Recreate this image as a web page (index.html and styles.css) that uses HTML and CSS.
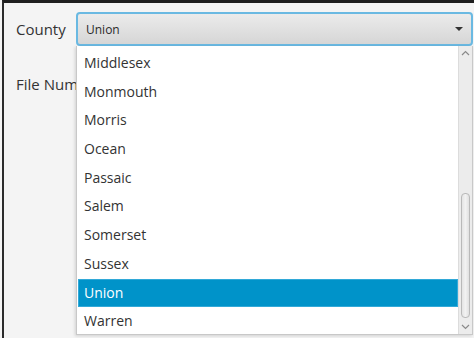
FILE: index.html
```html
<!DOCTYPE html>
<html lang="en">
<head>
    <meta charset="UTF-8">
    <title>County Picker</title>
    <link rel="stylesheet" href="styles.css">
</head>
<body>
    <div class="window">
        <div class="form">
            <div class="row">
                <label class="label">County</label>
                <div class="combo-wrap">
                    <div class="combo">
                        <span class="combo-value">Union</span>
                        <span class="combo-arrow"></span>
                    </div>

                    <!-- open popup list -->
                    <div class="popup">
                        <ul class="list">
                            <li>Middlesex</li>
                            <li>Monmouth</li>
                            <li>Morris</li>
                            <li>Ocean</li>
                            <li>Passaic</li>
                            <li>Salem</li>
                            <li>Somerset</li>
                            <li>Sussex</li>
                            <li class="selected">Union</li>
                            <li>Warren</li>
                        </ul>
                        <div class="scrollbar">
                            <svg class="sb-arrow" width="9" height="6" viewBox="0 0 9 6"><path d="M1 5 L4.5 1.5 L8 5" fill="none" stroke="#8a8a8a" stroke-width="1.2"/></svg>
                            <div class="track">
                                <div class="thumb"></div>
                            </div>
                            <svg class="sb-arrow" width="9" height="6" viewBox="0 0 9 6"><path d="M1 1 L4.5 4.5 L8 1" fill="none" stroke="#8a8a8a" stroke-width="1.2"/></svg>
                        </div>
                    </div>
                </div>
            </div>
            <div class="row">
                <label class="label">File Number</label>
            </div>
        </div>
    </div>
</body>
</html>
```

FILE: styles.css
```css
body {
    margin: 0;
    background: #f4f4f4;
    font-family: "Open Sans", "Noto Sans", sans-serif;
    color: #333;
}

.window {
    height: 335px;
    margin-left: 2px;
    border-top: 3px solid #1f1f1f;
    border-left: 2px solid #2b2b2b;
    background: #f4f4f4;
    overflow: hidden;
}

.form {
    padding: 9px 1px 0 12px;
}

.row {
    display: flex;
    align-items: center;
    height: 34px;
    margin-bottom: 21px;
}

.label {
    width: 60px;
    font-size: 15px;
    color: #333;
    white-space: nowrap;
    overflow: hidden;
}

.combo-wrap {
    position: relative;
    flex: 1;
    height: 34px;
}

.combo {
    display: flex;
    align-items: center;
    justify-content: space-between;
    height: 30px;
    padding: 0 8px 0 8px;
    border: 2px solid #6ab9e2;
    border-radius: 4px;
    background: linear-gradient(#ebebeb, #d6d6d6);
}

.combo-value {
    font-size: 12px;
    color: #2a2a2a;
}

.combo-arrow {
    width: 0;
    height: 0;
    border-left: 4px solid transparent;
    border-right: 4px solid transparent;
    border-top: 4px solid #333;
}

.popup {
    position: absolute;
    top: 34px;
    left: 0;
    right: 0;
    height: 288px;
    display: flex;
    background: #fff;
    border: 1px solid #c8c8c8;
    border-top: none;
    box-shadow: -1px 1px 3px rgba(0, 0, 0, 0.15);
}

.list {
    flex: 1;
    margin: 0;
    padding: 3px 0 0 1px;
    list-style: none;
}

.list li {
    height: 28.7px;
    line-height: 28px;
    padding-left: 6px;
    font-size: 14px;
    color: #333;
    box-sizing: border-box;
}

.list li.selected {
    background: #0093c9;
    border: 1px solid #32a9d8;
    line-height: 26px;
    padding-left: 5px;
    color: #fff;
}

.scrollbar {
    width: 13px;
    display: flex;
    flex-direction: column;
    align-items: center;
    background: #ececec;
    border-left: 1px solid #dcdcdc;
}

.sb-arrow {
    flex: none;
    margin: 4px 0;
}

.track {
    flex: 1;
    width: 100%;
    display: flex;
    flex-direction: column;
    justify-content: flex-end;
    align-items: center;
}

.thumb {
    width: 9px;
    height: 125px;
    margin-bottom: 2px;
    border: 1px solid #b9b9b9;
    border-radius: 4px;
    background: linear-gradient(90deg, #e4e4e4, #f2f2f2, #e0e0e0);
    box-sizing: border-box;
}
```
